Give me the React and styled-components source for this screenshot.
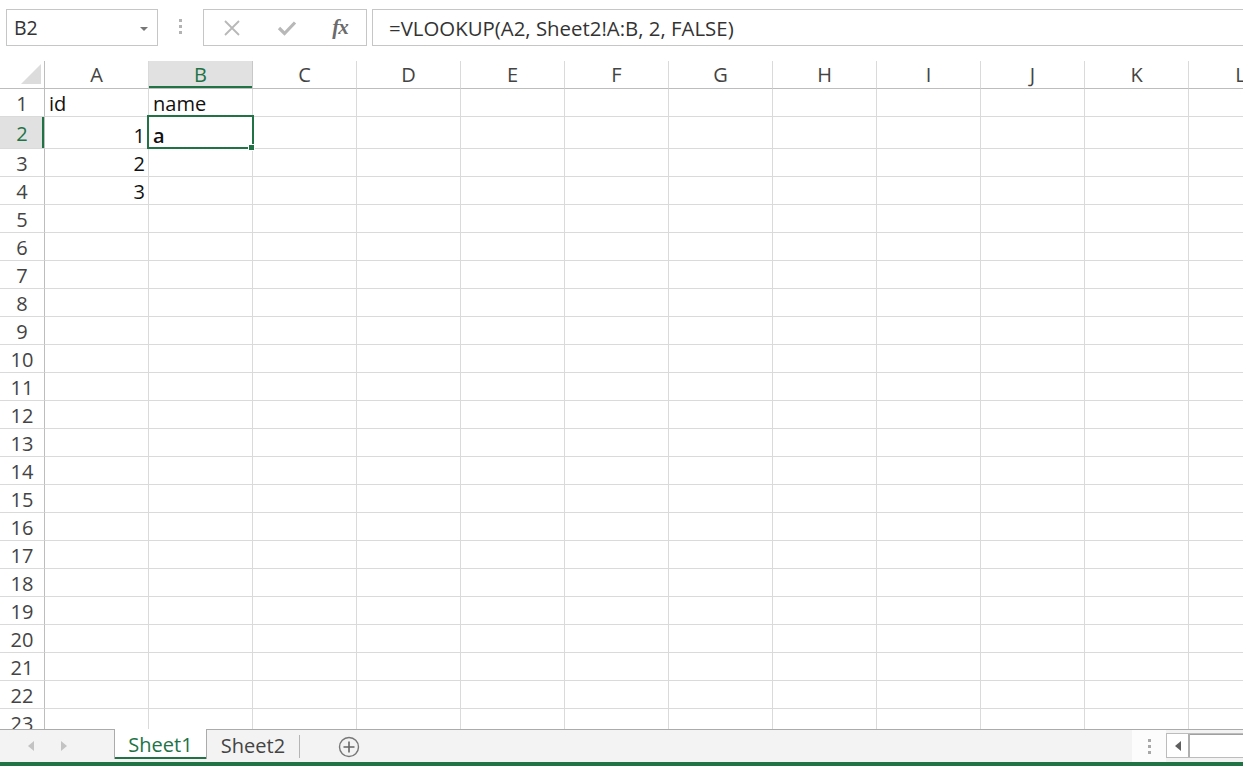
import React from "react";
import styled, { createGlobalStyle, css } from "styled-components";

const GREEN = "#217346";
const FONT = `"Open Sans", "Noto Sans", "Liberation Sans", sans-serif`;

const GlobalStyle = createGlobalStyle`
  html, body { margin: 0; padding: 0; background: #fff; overflow: hidden; }
  body { font-family: ${FONT}; }
  * { box-sizing: border-box; }
`;

const Page = styled.div`
  display: flex;
  flex-direction: column;
  width: 1243px;
  height: 766px;
  overflow: hidden;
`;

/* ---------- Formula bar ---------- */
const FormulaBar = styled.div`
  display: flex;
  align-items: flex-start;
  height: 61px;
  padding: 9px 0 0 6px;
  flex-shrink: 0;
`;

const NameBox = styled.div`
  width: 152px;
  height: 37px;
  border: 1px solid #c6c6c6;
  display: flex;
  align-items: center;
  justify-content: space-between;
  padding: 0 9px 0 7px;
  font-size: 19.5px;
  color: #333;
`;

const Caret = styled.span`
  width: 0;
  height: 0;
  border-left: 4px solid transparent;
  border-right: 4px solid transparent;
  border-top: 4px solid #777;
  margin-top: 2px;
`;

const Grip = styled.div`
  display: flex;
  flex-direction: column;
  gap: 3px;
  margin: 10px 0 0 21px;
  & > span {
    width: 3px;
    height: 3px;
    background: #b3b3b3;
  }
`;

const ButtonGroup = styled.div`
  width: 164px;
  height: 37px;
  margin-left: 21px;
  border: 1px solid #c6c6c6;
  display: flex;
  align-items: center;
  padding-left: 17px;
`;

const IconSlot = styled.div`
  width: ${(p) => p.$w}px;
  display: flex;
  align-items: center;
  justify-content: center;
`;

const Fx = styled.span`
  font-family: "Liberation Serif", "DejaVu Serif", serif;
  font-style: italic;
  font-weight: 700;
  font-size: 21px;
  color: #6b6b6b;
  letter-spacing: -1px;
`;

const FormulaInput = styled.div`
  flex: 1;
  height: 37px;
  margin-left: 5px;
  border: 1px solid #c6c6c6;
  border-right: none;
  display: flex;
  align-items: center;
  padding-left: 16px;
  font-size: 20.4px;
  color: #333;
  white-space: nowrap;
`;

/* ---------- Grid ---------- */
const GridWrap = styled.div`
  position: relative;
  flex: 1;
  overflow: hidden;
`;

const Sheet = styled.div`
  display: grid;
  grid-template-columns: 45px repeat(12, 104px);
  grid-template-rows: ${(p) => p.$rows};
`;

const baseCell = css`
  border-right: 1px solid #dadada;
  border-bottom: 1px solid #dadada;
  display: flex;
  white-space: nowrap;
  overflow: hidden;
`;

const Corner = styled.div`
  position: relative;
  border-right: 1px solid #bdbdbd;
  border-bottom: 1px solid #bdbdbd;
  & > svg { position: absolute; right: 3px; bottom: 4px; }
`;

const ColHeader = styled.div`
  ${baseCell};
  border-bottom: 1px solid #bdbdbd;
  align-items: center;
  justify-content: center;
  font-size: 20px;
  color: ${(p) => (p.$active ? GREEN : "#444")};
  background: ${(p) => (p.$active ? "#e1e1e1" : "#fff")};
  border-right-color: ${(p) => (p.$active ? "#c8c8c8" : "#dadada")};
  box-shadow: ${(p) => (p.$active ? `inset 0 -2px 0 ${GREEN}` : "none")};
`;

const RowHeader = styled.div`
  ${baseCell};
  border-right: 1px solid #bdbdbd;
  align-items: center;
  justify-content: center;
  padding-top: 2px;
  font-size: 20px;
  color: ${(p) => (p.$active ? GREEN : "#444")};
  background: ${(p) => (p.$active ? "#e1e1e1" : "#fff")};
  box-shadow: ${(p) => (p.$active ? `inset -2px 0 0 ${GREEN}` : "none")};
`;

const Cell = styled.div`
  ${baseCell};
  align-items: flex-end;
  padding: 0 3px 0 4px;
  justify-content: ${(p) => (p.$num ? "flex-end" : "flex-start")};
  font-size: 20px;
  color: #111;
  font-weight: ${(p) => (p.$strong ? 600 : 400)};
  line-height: 24px;
`;

const Selection = styled.div`
  position: absolute;
  left: 147px;
  top: 54px;
  width: 107px;
  height: 34px;
  border: 2px solid ${GREEN};
  pointer-events: none;
`;

const FillHandle = styled.span`
  position: absolute;
  right: -3px;
  bottom: -4px;
  width: 7px;
  height: 7px;
  background: ${GREEN};
  border: 1px solid #fff;
`;

/* ---------- Tab bar ---------- */
const TabBar = styled.div`
  flex-shrink: 0;
  height: 33px;
  border-top: 1px solid #ababab;
  background: #f3f3f3;
  display: flex;
  align-items: flex-start;
`;

const NavArea = styled.div`
  width: 114px;
  height: 32px;
  display: flex;
  align-items: center;
  padding-left: 28px;
  gap: 27px;
`;

const NavArrow = styled.span`
  width: 0;
  height: 0;
  border-top: 5px solid transparent;
  border-bottom: 5px solid transparent;
  ${(p) =>
    p.$dir === "left"
      ? `border-right: 6px solid #c3c3c3;`
      : `border-left: 6px solid #c3c3c3;`}
`;

const Tab = styled.div`
  width: ${(p) => p.$w}px;
  height: 30px;
  margin-top: -1px;
  display: flex;
  align-items: center;
  justify-content: center;
  font-size: 20px;
  ${(p) =>
    p.$active
      ? css`
          background: #fff;
          color: ${GREEN};
          border-left: 1px solid #ababab;
          border-right: 1px solid #ababab;
          box-shadow: inset 0 -2px 0 ${GREEN};
          padding-top: 1px;
        `
      : css`
          color: #444;
          padding-top: 3px;
        `}
`;

const TabDivider = styled.span`
  width: 1px;
  height: 23px;
  margin-top: 5px;
  background: #b5b5b5;
`;

const AddSheet = styled.div`
  margin-left: 38px;
  margin-top: 6px;
  display: flex;
`;

const Spacer = styled.div`
  flex: 1;
`;

const SplitGrip = styled.div`
  width: 34px;
  height: 32px;
  background: #fcfcfc;
  display: flex;
  flex-direction: column;
  align-items: center;
  justify-content: center;
  gap: 3px;
  & > span {
    width: 3px;
    height: 3px;
    background: #a8a8a8;
  }
`;

const HScroll = styled.div`
  flex: 0 0 77px;
  height: 25px;
  margin-top: 3px;
  border: 1px solid #bcbcbc;
  border-right: none;
  display: flex;
  background: #fff;
`;

const ScrollBtn = styled.div`
  width: 23px;
  border-right: 2px solid #b0b0b0;
  display: flex;
  align-items: center;
  justify-content: center;
  & > span {
    width: 0;
    height: 0;
    border-top: 5px solid transparent;
    border-bottom: 5px solid transparent;
    border-right: 6px solid #5f5f5f;
  }
`;

const ScrollTrack = styled.div`
  flex: 1;
  border-top: 1px solid #a0a0a0;
`;

const StatusBar = styled.div`
  flex-shrink: 0;
  height: 4px;
  background: ${GREEN};
`;

/* ---------- Data ---------- */
const COLS = ["A", "B", "C", "D", "E", "F", "G", "H", "I", "J", "K", "L"];
const ROW_COUNT = 23;
const rowHeights = ["28px"];
for (let r = 1; r <= ROW_COUNT; r++) rowHeights.push(r === 2 ? "32px" : "28px");

const data = {
  A1: { v: "id" },
  B1: { v: "name" },
  A2: { v: "1", num: true },
  B2: { v: "a", strong: true },
  A3: { v: "2", num: true },
  A4: { v: "3", num: true },
};

export default function App() {
  const cells = [];
  cells.push(
    <Corner key="corner">
      <svg width="20" height="20" viewBox="0 0 20 20">
        <polygon points="20,0 20,20 0,20" fill="#dcdcdc" />
      </svg>
    </Corner>
  );
  COLS.forEach((c) =>
    cells.push(
      <ColHeader key={`h-${c}`} $active={c === "B"}>
        {c}
      </ColHeader>
    )
  );
  for (let r = 1; r <= ROW_COUNT; r++) {
    cells.push(
      <RowHeader key={`r-${r}`} $active={r === 2}>
        {r}
      </RowHeader>
    );
    COLS.forEach((c) => {
      const d = data[`${c}${r}`];
      cells.push(
        <Cell key={`${c}${r}`} $num={d?.num} $strong={d?.strong}>
          {d?.v}
        </Cell>
      );
    });
  }

  return (
    <>
      <GlobalStyle />
      <Page>
        <FormulaBar>
          <NameBox>
            <span>B2</span>
            <Caret />
          </NameBox>
          <Grip>
            <span />
            <span />
            <span />
          </Grip>
          <ButtonGroup>
            <IconSlot $w={22}>
              <svg width="18" height="18" viewBox="0 0 18 18">
                <path d="M2 2 L16 16 M16 2 L2 16" stroke="#b8b8b8" strokeWidth="1.8" />
              </svg>
            </IconSlot>
            <IconSlot $w={88}>
              <svg width="20" height="16" viewBox="0 0 20 16">
                <path d="M2 8 L7.5 13.5 L18 2.5" stroke="#b8b8b8" strokeWidth="3.2" fill="none" />
              </svg>
            </IconSlot>
            <IconSlot $w={18}>
              <Fx>fx</Fx>
            </IconSlot>
          </ButtonGroup>
          <FormulaInput>=VLOOKUP(A2, Sheet2!A:B, 2, FALSE)</FormulaInput>
        </FormulaBar>

        <GridWrap>
          <Sheet $rows={rowHeights.join(" ")}>{cells}</Sheet>
          <Selection>
            <FillHandle />
          </Selection>
        </GridWrap>

        <TabBar>
          <NavArea>
            <NavArrow $dir="left" />
            <NavArrow $dir="right" />
          </NavArea>
          <Tab $w={93} $active>
            Sheet1
          </Tab>
          <Tab $w={92}>Sheet2</Tab>
          <TabDivider />
          <AddSheet>
            <svg width="22" height="22" viewBox="0 0 22 22">
              <circle cx="11" cy="11" r="9.5" fill="none" stroke="#777" strokeWidth="1.4" />
              <path d="M11 5.5 V16.5 M5.5 11 H16.5" stroke="#666" strokeWidth="1.6" />
            </svg>
          </AddSheet>
          <Spacer />
          <SplitGrip>
            <span />
            <span />
            <span />
          </SplitGrip>
          <HScroll>
            <ScrollBtn>
              <span />
            </ScrollBtn>
            <ScrollTrack />
          </HScroll>
        </TabBar>
        <StatusBar />
      </Page>
    </>
  );
}
